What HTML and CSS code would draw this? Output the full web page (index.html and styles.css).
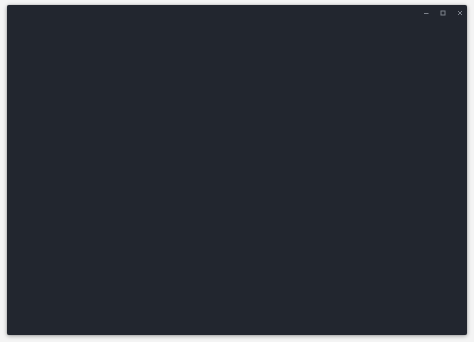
FILE: index.html
```html
<!DOCTYPE html>
<html>
<head>
<meta charset="utf-8">
<link rel="stylesheet" href="styles.css">
</head>
<body>
<div class="desktop">
  <div class="window">
    <div class="titlebar">
      <button class="ctl" aria-label="Minimize">
        <svg width="10" height="10" viewBox="0 0 10 10"><path d="M3 5.5h4.5" stroke="currentColor" stroke-width="1"/></svg>
      </button>
      <button class="ctl" aria-label="Maximize">
        <svg width="10" height="10" viewBox="0 0 10 10"><rect x="3" y="3" width="4" height="4" fill="none" stroke="currentColor" stroke-width="1"/></svg>
      </button>
      <button class="ctl" aria-label="Close">
        <svg width="10" height="10" viewBox="0 0 10 10"><path d="M3 3l4 4M7 3l-4 4" stroke="currentColor" stroke-width="1"/></svg>
      </button>
    </div>
    <div class="content"></div>
  </div>
</div>
</body>
</html>
```
FILE: styles.css
```css
html, body {
  margin: 0;
  padding: 0;
  width: 474px;
  height: 342px;
  background: #f4f4f4;
  font-family: "Noto Sans", sans-serif;
  overflow: hidden;
}
.desktop {
  box-sizing: border-box;
  width: 474px;
  height: 342px;
  padding: 5px 7px 7px 7px;
  display: flex;
}
.window {
  flex: 1;
  background: #22262f;
  border-radius: 2px;
  box-shadow: 0 1px 4px rgba(0,0,0,0.35), 0 0 1px rgba(0,0,0,0.4);
  display: flex;
  flex-direction: column;
}
.titlebar {
  display: flex;
  justify-content: flex-end;
  gap: 6px;
  padding: 3px 2px 0 0;
}
.ctl {
  width: 11px;
  height: 10px;
  padding: 0;
  border: 0;
  background: transparent;
  color: #7d828c;
  display: flex;
  align-items: center;
  justify-content: center;
}
.ctl svg { display: block; }
.content { flex: 1; }
```
